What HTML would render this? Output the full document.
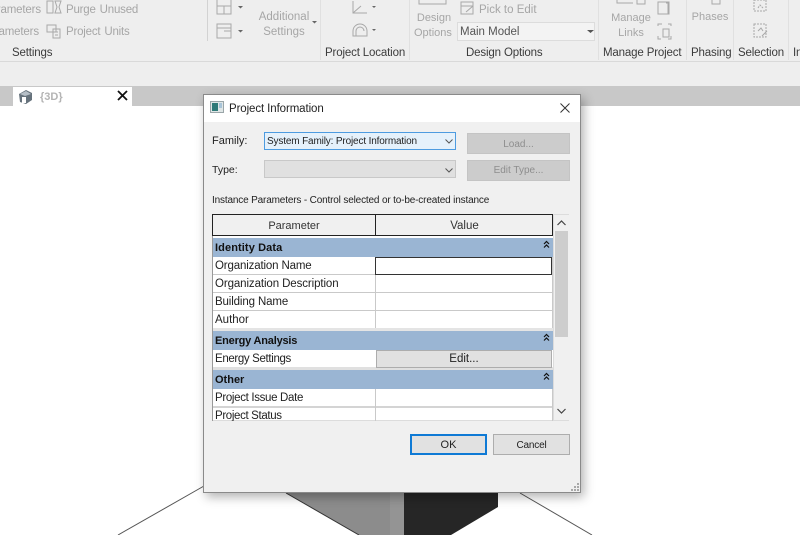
<!DOCTYPE html>
<html><head><meta charset="utf-8"><style>
html,body{margin:0;padding:0;background:#fff}
#p{position:relative;width:800px;height:535px;overflow:hidden;background:#fff;font-family:"Liberation Sans",sans-serif;font-size:12px;color:#222;filter:blur(.3px)}
#p div{position:absolute;white-space:nowrap}
.g{color:#a6a6a6;font-size:11.500px}
.n{letter-spacing:-.15px}
.l{color:#3c3c3c;font-size:11.500px;letter-spacing:-.15px}
.r{left:215px;height:17px;line-height:19px;font-size:11.500px}
.h{left:213px;width:340px;background:#9ab5d3;font-weight:bold;color:#111;line-height:21px;padding-left:2px;box-sizing:border-box;font-size:11px}
.sep{background:#e0e0e0}
.c{text-align:center}
svg{position:absolute;overflow:visible}
</style></head><body><div id="p">
<!-- ribbon -->
<div style="left:0;top:0;width:800px;height:61px;background:#eee"></div>
<div style="left:0;top:61px;width:800px;height:1px;background:#d9d9d9"></div>
<div style="left:0;top:62px;width:800px;height:24px;background:#eee"></div>
<div style="left:0;top:86px;width:800px;height:20px;background:#c8c8c8"></div>
<div class="g n" style="left:-17px;top:3px;line-height:14px">Parameters</div>
<div class="g n" style="left:-19px;top:25px;line-height:14px">Parameters</div>
<div class="g n" style="left:66px;top:3px;line-height:14px;word-spacing:1px;letter-spacing:-.2px">Purge Unused</div>
<div class="g n" style="left:66px;top:25px;line-height:14px;word-spacing:1px;letter-spacing:-.2px">Project Units</div>
<div class="l" style="left:12px;top:46px;line-height:14px">Settings</div>
<div class="l" style="left:325px;top:46px;line-height:14px">Project Location</div>
<div class="l" style="left:466px;top:46px;line-height:14px">Design Options</div>
<div class="l" style="left:603px;top:46px;line-height:14px">Manage Project</div>
<div class="l" style="left:691px;top:46px;line-height:14px">Phasing</div>
<div class="l" style="left:738px;top:46px;line-height:14px">Selection</div>
<div class="l" style="left:793px;top:46px;line-height:14px">In</div>
<div class="g c" style="left:252px;top:10px;width:64px;line-height:15px">Additional</div>
<div class="g c" style="left:252px;top:25px;width:64px;line-height:15px">Settings</div>
<div class="g c" style="left:410px;top:11px;width:48px;line-height:15px;font-size:11px">Design</div>
<div class="g" style="left:414px;top:26px;line-height:15px;font-size:11px">Options</div>
<div class="g" style="left:479px;top:3px;line-height:14px">Pick to Edit</div>
<div style="left:457px;top:22px;width:138px;height:19px;background:#f3f3f3;border:1px solid #dcdcdc;box-sizing:border-box"></div>
<div style="left:460px;top:25px;line-height:14px;color:#555;font-size:11.500px">Main Model</div>
<div class="g c" style="left:605px;top:11px;width:52px;line-height:15px;font-size:11px">Manage</div>
<div class="g c" style="left:605px;top:26px;width:52px;line-height:15px;font-size:11px">Links</div>
<div class="g c" style="left:690px;top:10px;width:40px;line-height:15px;font-size:11px">Phases</div>
<!-- ribbon separators -->
<div class="sep" style="left:207px;top:0;width:1px;height:41px;background:#d2d2d2"></div>
<div class="sep" style="left:320px;top:0;width:1px;height:60px"></div>
<div class="sep" style="left:409px;top:0;width:1px;height:60px"></div>
<div class="sep" style="left:598px;top:0;width:1px;height:60px"></div>
<div class="sep" style="left:686px;top:0;width:1px;height:60px"></div>
<div class="sep" style="left:733px;top:0;width:1px;height:60px"></div>
<div class="sep" style="left:788px;top:0;width:1px;height:60px"></div>
<!-- ribbon icons -->
<svg style="left:0;top:0" width="800" height="62" fill="none" stroke="#a8a8a8" stroke-width="1">
<path d="M47 1h6v12h-6zM59 1l-4 0 2 6-2 6h6l-2-6 2-6z"/>
<path d="M47 25h9v7h-9zM53 29h7v9h-7zM55 32h3M55 35h3"/>
<path d="M217 0v14h14v-14M217 6h14M224 6v8"/>
<path d="M217 24h14v14h-14zM217 28h14M224 31h7v7"/>
<path d="M353 1v12h14M353 13l8-7"/>
<path d="M353 36v-5a7 7 0 0 1 14 0v5zM356 36v-5a4 4 0 0 1 8 0"/>
<path d="M419 -2v6h27v-6"/>
<path d="M461 2h12v12h-12zM461 6h12M466 12l7-6"/>
<path d="M617 -2v5h16M637 -2v6h8v-6"/>
<path d="M658 2h11v12h-11zM666 3l2 0v11"/>
<path d="M658 26v-2h4M668 24h3v2M658 36v3h3M671 36v3h-3M663 29h6v8h-6z"/>
<path d="M712 -2v6h8v-6"/>
<path d="M754 0h12v11h-12zM758 8l2-3 3 3" stroke-dasharray="2 1"/>
<path d="M754 24h12v13h-12z" stroke-dasharray="2 1"/><path d="M758 31l3-3 2 3M762 36l5-5"/>
</svg>
<svg style="left:0;top:0" width="800" height="62" fill="#666" stroke="none">
<path d="M238 6h5l-2.500 2.500zM238 30h5l-2.500 2.500zM312 21h5l-2.500 2.500zM372 6h4l-2 2zM372 29h4l-2 2z"/>
<path d="M587 30h7l-3.500 3z" fill="#555"/>
</svg>
<!-- tab -->
<div style="left:13px;top:87px;width:119px;height:19px;background:#fff"></div>
<div style="left:40px;top:90px;line-height:14px;color:#b4b4b4;font-weight:bold;font-size:11px">{3D}</div>
<svg style="left:18px;top:89px" width="16" height="16" viewBox="0 0 16 16"><path d="M1 5l7-4 6 3v7l-6 4-6-2z" fill="#66727c"/><path d="M2 5l6-3 5 3-6 2z" fill="#b6bfc7"/><path d="M4 8h4v6H4z" fill="#fff"/></svg>
<svg style="left:117px;top:90px" width="11" height="11"><path d="M1 1l9 9M10 1l-9 9" stroke="#111" stroke-width="1.800"/></svg>
<!-- canvas drawing -->
<svg style="left:0;top:0" width="800" height="535">
<path d="M286 493L359 535H404V493z" fill="#8c8c8c"/>
<path d="M390 493h14v42h-14z" fill="#949494"/>
<path d="M404 493H498V507L451 535H404z" fill="#262626"/>
<path d="M286 493L359 535" stroke="#333" stroke-width="1"/>
<path d="M118 535L204 486M520 493L592 535" stroke="#555" stroke-width="1" fill="none"/>
</svg>
<!-- dialog -->
<div style="left:203px;top:94px;width:378px;height:399px;background:#f0f0f0;border:1px solid #8a8a8a;box-sizing:border-box;box-shadow:3px 4px 10px rgba(0,0,0,.3)"></div>
<div style="left:204px;top:95px;width:376px;height:27px;background:#fff"></div>
<svg style="left:210px;top:101px" width="14" height="13"><rect x=".5" y=".5" width="13" height="11" fill="#dfe6e6" stroke="#9aa5a8"/><rect x="2" y="2" width="6" height="8" fill="#2f7a78"/><rect x="9" y="2" width="3" height="5" fill="#a8c4d8"/></svg>
<div style="left:229px;top:101px;line-height:16px;color:#222;font-size:11.500px;letter-spacing:-.1px">Project Information</div>
<svg style="left:560px;top:103px" width="10" height="10"><path d="M.5 .5l9 9M9.500 .5l-9 9" stroke="#333" stroke-width="1" fill="none"/></svg>
<div style="left:212px;top:134px;line-height:14px;font-size:11px">Family:</div>
<div style="left:212px;top:163px;line-height:14px;font-size:10.500px">Type:</div>
<div style="left:264px;top:132px;width:192px;height:18px;background:#e5f1fb;border:1px solid #4d9be0;box-sizing:border-box"></div>
<div style="left:267px;top:135px;line-height:14px;font-size:10px;letter-spacing:-.15px">System Family: Project Information</div>
<div style="left:264px;top:160px;width:192px;height:18px;background:#e0e0e0;border:1px solid #c8c8c8;box-sizing:border-box"></div>
<svg style="left:445px;top:139px" width="9" height="36" fill="none" stroke="#555"><path d="M.5 .5l3.500 3.500 3.500-3.500M.5 29.500l3.500 3.500 3.500-3.500"/></svg>
<div class="c" style="left:467px;top:133px;width:103px;height:21px;line-height:21px;background:#ccc;border:1px solid #c4c4c4;box-sizing:border-box;color:#8e8e8e;font-size:10px">Load...</div>
<div class="c" style="left:467px;top:160px;width:103px;height:21px;line-height:20px;background:#ccc;border:1px solid #c4c4c4;box-sizing:border-box;color:#8e8e8e;font-size:10px">Edit Type...</div>
<div style="left:212px;top:194px;line-height:14px;font-size:10px;letter-spacing:-.16px">Instance Parameters - Control selected or to-be-created instance</div>
<!-- table -->
<div style="left:212px;top:214px;width:357px;height:207px;background:#fff;border:1px solid #dcdcdc;box-sizing:border-box"></div>
<div style="left:212px;top:214px;width:341px;height:22px;background:#f0f0f0;border:1px solid #222;box-sizing:border-box"></div>
<div style="left:375px;top:214px;width:1px;height:22px;background:#222"></div>
<div class="c" style="left:213px;top:219px;width:162px;line-height:15px;color:#333;font-size:11px">Parameter</div>
<div class="c" style="left:376px;top:219px;width:177px;line-height:15px;color:#333;font-size:11.500px">Value</div>
<div style="left:212px;top:236px;width:1px;height:185px;background:#999"></div>
<div style="left:553px;top:214px;width:1px;height:207px;background:#dcdcdc"></div>
<div class="h" style="top:238px;height:19px;letter-spacing:.1px">Identity Data</div>
<div class="r" style="top:257px;letter-spacing:-.15px">Organization Name</div>
<div class="r" style="top:275px;letter-spacing:-.1px">Organization Description</div>
<div class="r" style="top:293px;letter-spacing:-.13px">Building Name</div>
<div class="r" style="top:311px">Author</div>
<div class="h" style="top:331px;height:19px;letter-spacing:-.2px">Energy Analysis</div>
<div class="r" style="top:350px;letter-spacing:-.35px">Energy Settings</div>
<div class="h" style="top:370px;height:19px">Other</div>
<div class="r" style="top:389px;letter-spacing:-.33px">Project Issue Date</div>
<div class="r" style="top:407px;height:14px;overflow:hidden;letter-spacing:-.35px">Project Status</div>
<!-- row lines -->
<div style="left:213px;top:274px;width:340px;height:1px;background:#c9c9c9"></div>
<div style="left:213px;top:292px;width:340px;height:1px;background:#c9c9c9"></div>
<div style="left:213px;top:310px;width:340px;height:1px;background:#c9c9c9"></div>
<div style="left:213px;top:328px;width:340px;height:3px;background:#e4e4e4"></div>
<div style="left:213px;top:367px;width:340px;height:3px;background:#e0e0e0"></div>
<div style="left:213px;top:406px;width:340px;height:2px;background:#d4d4d4"></div>
<div style="left:375px;top:257px;width:1px;height:71px;background:#c9c9c9"></div>
<div style="left:375px;top:389px;width:1px;height:32px;background:#c9c9c9"></div>
<div style="left:552px;top:257px;width:1px;height:71px;background:#c9c9c9"></div>
<div style="left:552px;top:389px;width:1px;height:32px;background:#c9c9c9"></div>
<div style="left:375px;top:257px;width:177px;height:18px;border:1px solid #333;box-sizing:border-box;background:#fff"></div>
<div class="c" style="left:376px;top:350px;width:176px;height:18px;line-height:17px;background:#e1e1e1;border:1px solid #adadad;box-sizing:border-box;color:#222;font-size:11.500px">Edit...</div>
<div style="left:204px;top:421px;width:376px;height:71px;background:#f0f0f0"></div>
<!-- collapse chevrons -->
<svg style="left:0;top:0" width="800" height="535" fill="none" stroke="#111" stroke-width="1.200">
<path d="M544 244l2.500-2.500 2.500 2.500M544 247.500l2.500-2.500 2.500 2.500"/>
<path d="M544 337l2.500-2.500 2.500 2.500M544 340.500l2.500-2.500 2.500 2.500"/>
<path d="M544 376l2.500-2.500 2.500 2.500M544 379.500l2.500-2.500 2.500 2.500"/>
</svg>
<!-- scrollbar -->
<div style="left:554px;top:215px;width:15px;height:205px;background:#f0f0f0"></div>
<div style="left:555px;top:231px;width:13px;height:106px;background:#cdcdcd"></div>
<svg style="left:556px;top:219px" width="11" height="197" fill="none" stroke="#444" stroke-width="1.200"><path d="M1.500 6l4-4 4 4M1.500 190l4 4 4-4"/></svg>
<!-- buttons -->
<div class="c" style="left:410px;top:434px;width:77px;height:21px;line-height:19px;background:#e1e1e1;border:2px solid #0f7ad5;box-sizing:border-box;font-size:11px;color:#222">OK</div>
<div class="c" style="left:493px;top:434px;width:77px;height:21px;line-height:21px;background:#e1e1e1;border:1px solid #adadad;box-sizing:border-box;font-size:10px;letter-spacing:-.2px;color:#222">Cancel</div>
<!-- resize grip -->
<svg style="left:570px;top:482px" width="10" height="10" fill="#a8a8a8"><rect x="7" y="1" width="2" height="2"/><rect x="4" y="4" width="2" height="2"/><rect x="7" y="4" width="2" height="2"/><rect x="1" y="7" width="2" height="2"/><rect x="4" y="7" width="2" height="2"/><rect x="7" y="7" width="2" height="2"/></svg>
</div></body></html>
